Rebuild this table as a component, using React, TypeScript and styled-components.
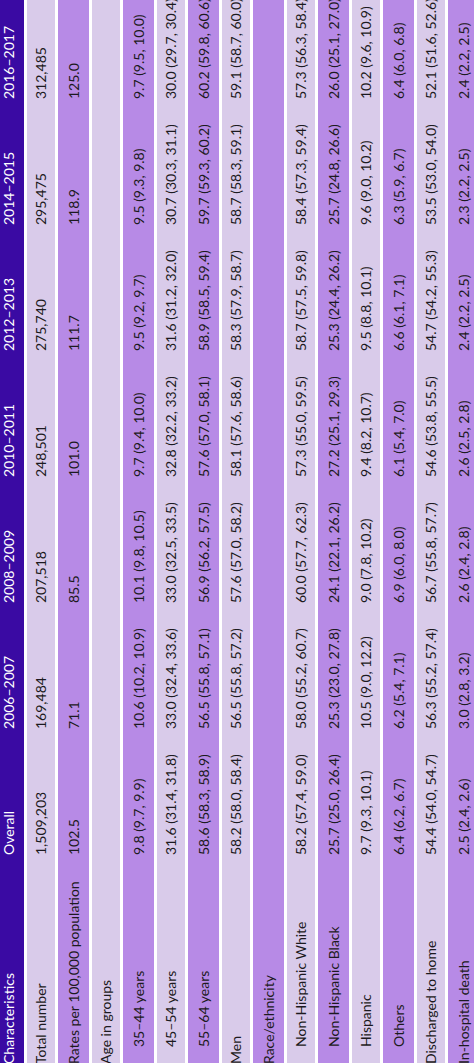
import styled, { createGlobalStyle } from 'styled-components';

const GlobalStyle = createGlobalStyle`
  html, body {
    margin: 0;
    padding: 0;
    background: #ffffff;
  }
`;

type Tone = 'header' | 'light' | 'purple';

const Page = styled.div`
  width: 474px;
  height: 1063px;
  overflow: hidden;
  background: #ffffff;
`;

/* the table is laid out normally, then turned on its side like the scan */
const Table = styled.div`
  width: 1063px;
  display: flex;
  flex-direction: column;
  gap: 3px;
  transform-origin: top left;
  transform: rotate(-90deg) translateX(-100%);
  font-family: Lato, 'Liberation Sans', sans-serif;
  font-size: 14px;
  color: #1c1a20;
`;

const Row = styled.div<{ $tone: Tone }>`
  display: grid;
  grid-template-columns: 209px repeat(7, 126px);
  margin-left: -1px;
  white-space: nowrap;
  height: ${(p) => (p.$tone === 'header' ? '24px' : p.$tone === 'light' ? '27.5px' : '31.5px')};
  align-items: ${(p) => (p.$tone === 'header' ? 'start' : 'center')};
  background: ${(p) =>
    p.$tone === 'header' ? '#3a0aa3' : p.$tone === 'light' ? '#d9cbea' : '#b78ae6'};
  color: ${(p) => (p.$tone === 'header' ? '#ffffff' : 'inherit')};
  line-height: ${(p) => (p.$tone === 'header' ? '14px' : 'normal')};
  padding-top: ${(p) => (p.$tone === 'header' ? '2px' : '0')};
  box-sizing: border-box;
`;

const Label = styled.div<{ $indent?: boolean }>`
  padding-left: ${(p) => (p.$indent ? '17px' : '0')};
`;

const Cell = styled.div``;

const years = ['Overall', '2006–2007', '2008–2009', '2010–2011', '2012–2013', '2014–2015', '2016–2017'];

const rows: { label: string; indent?: boolean; values: string[] }[] = [
  { label: 'Total number', values: ['1,509,203', '169,484', '207,518', '248,501', '275,740', '295,475', '312,485'] },
  { label: 'Rates per 100,000 population', values: ['102.5', '71.1', '85.5', '101.0', '111.7', '118.9', '125.0'] },
  { label: 'Age in groups', values: [] },
  {
    label: '35–44 years',
    indent: true,
    values: ['9.8 (9.7, 9.9)', '10.6 (10.2, 10.9)', '10.1 (9.8, 10.5)', '9.7 (9.4, 10.0)', '9.5 (9.2, 9.7)', '9.5 (9.3, 9.8)', '9.7 (9.5, 10.0)'],
  },
  {
    label: '45–54 years',
    indent: true,
    values: ['31.6 (31.4, 31.8)', '33.0 (32.4, 33.6)', '33.0 (32.5, 33.5)', '32.8 (32.2, 33.2)', '31.6 (31.2, 32.0)', '30.7 (30.3, 31.1)', '30.0 (29.7, 30.4)'],
  },
  {
    label: '55–64 years',
    indent: true,
    values: ['58.6 (58.3, 58.9)', '56.5 (55.8, 57.1)', '56.9 (56.2, 57.5)', '57.6 (57.0, 58.1)', '58.9 (58.5, 59.4)', '59.7 (59.3, 60.2)', '60.2 (59.8, 60.6)'],
  },
  {
    label: 'Men',
    values: ['58.2 (58.0, 58.4)', '56.5 (55.8, 57.2)', '57.6 (57.0, 58.2)', '58.1 (57.6, 58.6)', '58.3 (57.9, 58.7)', '58.7 (58.3, 59.1)', '59.1 (58.7, 60.0)'],
  },
  { label: 'Race/ethnicity', values: [] },
  {
    label: 'Non-Hispanic White',
    indent: true,
    values: ['58.2 (57.4, 59.0)', '58.0 (55.2, 60.7)', '60.0 (57.7, 62.3)', '57.3 (55.0, 59.5)', '58.7 (57.5, 59.8)', '58.4 (57.3, 59.4)', '57.3 (56.3, 58.4)'],
  },
  {
    label: 'Non-Hispanic Black',
    indent: true,
    values: ['25.7 (25.0, 26.4)', '25.3 (23.0, 27.8)', '24.1 (22.1, 26.2)', '27.2 (25.1, 29.3)', '25.3 (24.4, 26.2)', '25.7 (24.8, 26.6)', '26.0 (25.1, 27.0)'],
  },
  {
    label: 'Hispanic',
    indent: true,
    values: ['9.7 (9.3, 10.1)', '10.5 (9.0, 12.2)', '9.0 (7.8, 10.2)', '9.4 (8.2, 10.7)', '9.5 (8.8, 10.1)', '9.6 (9.0, 10.2)', '10.2 (9.6, 10.9)'],
  },
  {
    label: 'Others',
    indent: true,
    values: ['6.4 (6.2, 6.7)', '6.2 (5.4, 7.1)', '6.9 (6.0, 8.0)', '6.1 (5.4, 7.0)', '6.6 (6.1, 7.1)', '6.3 (5.9, 6.7)', '6.4 (6.0, 6.8)'],
  },
  {
    label: 'Discharged to home',
    values: ['54.4 (54.0, 54.7)', '56.3 (55.2, 57.4)', '56.7 (55.8, 57.7)', '54.6 (53.8, 55.5)', '54.7 (54.2, 55.3)', '53.5 (53.0, 54.0)', '52.1 (51.6, 52.6)'],
  },
  {
    label: 'In-hospital death',
    values: ['2.5 (2.4, 2.6)', '3.0 (2.8, 3.2)', '2.6 (2.4, 2.8)', '2.6 (2.5, 2.8)', '2.4 (2.2, 2.5)', '2.3 (2.2, 2.5)', '2.4 (2.2, 2.5)'],
  },
];

const App = () => {
  return (
    <Page>
      <GlobalStyle />
      <Table>
        <Row $tone="header">
          <Label>Characteristics</Label>
          {years.map((y) => (
            <Cell key={y}>{y}</Cell>
          ))}
        </Row>
        {rows.map((r, i) => (
          <Row key={r.label} $tone={i % 2 === 0 ? 'light' : 'purple'}>
            <Label $indent={r.indent}>{r.label}</Label>
            {r.values.map((v, j) => (
              <Cell key={j}>{v}</Cell>
            ))}
          </Row>
        ))}
      </Table>
    </Page>
  );
};

export default App;
